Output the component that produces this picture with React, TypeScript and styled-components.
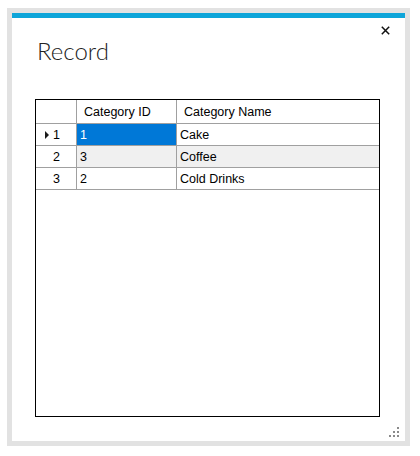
import styled, { createGlobalStyle } from "styled-components";

const GlobalStyle = createGlobalStyle`
  html, body {
    margin: 0;
    padding: 0;
    background: #ffffff;
  }
  body {
    font-family: "Liberation Sans", Arial, sans-serif;
  }
`;

const Frame = styled.div`
  margin: 8px 0 0 7px;
  width: 403px;
  height: 438px;
  box-sizing: border-box;
  padding: 5px;
  background: #e2e2e2;
`;

const Window = styled.div`
  position: relative;
  height: 100%;
  background: #ffffff;
  display: flex;
  flex-direction: column;
`;

const AccentBar = styled.div`
  height: 5px;
  background: #0ea5d9;
`;

const CloseRow = styled.div`
  display: flex;
  justify-content: flex-end;
  padding: 8px 15px 0 0;
`;

const CloseButton = styled.button`
  width: 9px;
  height: 9px;
  padding: 0;
  border: none;
  background: none;
  display: flex;
  cursor: pointer;
`;

const Title = styled.h1`
  margin: 1px 0 0 25px;
  font-family: Lato, "Open Sans", sans-serif;
  font-weight: 300;
  font-size: 24px;
  line-height: 29px;
  color: #222222;
`;

const Grid = styled.div`
  margin: 34px 0 0 23px;
  width: 345px;
  height: 318px;
  box-sizing: border-box;
  border: 1px solid #000000;
  background: #ffffff;
  font-size: 12.5px;
  color: #000000;
`;

const Row = styled.div<{ $header?: boolean }>`
  display: grid;
  grid-template-columns: 41px 100px 202px;
  height: ${(p) => (p.$header ? "24px" : "22px")};
`;

const Cell = styled.div<{ $header?: boolean; $selected?: boolean; $alt?: boolean }>`
  box-sizing: border-box;
  display: flex;
  align-items: center;
  padding-left: ${(p) => (p.$header ? "7px" : "3px")};
  border-right: 1px solid #a0a0a0;
  border-bottom: 1px solid #a0a0a0;
  background: ${(p) => (p.$selected ? "#0078d7" : p.$alt ? "#f0f0f0" : "#ffffff")};
  color: ${(p) => (p.$selected ? "#ffffff" : "#000000")};
  white-space: nowrap;
  overflow: hidden;
  &:last-child {
    border-right: none;
  }
`;

const RowHeader = styled.div`
  box-sizing: border-box;
  display: flex;
  align-items: center;
  padding-left: 9px;
  border-right: 1px solid #a0a0a0;
  border-bottom: 1px solid #a0a0a0;
  background: #ffffff;
`;

const IndicatorSlot = styled.span`
  width: 8px;
  display: flex;
  align-items: center;
`;

const Arrow = styled.span`
  width: 0;
  height: 0;
  border-top: 4px solid transparent;
  border-bottom: 4px solid transparent;
  border-left: 4.5px solid #1a1a1a;
`;

const Grip = styled.svg`
  position: absolute;
  right: 6px;
  bottom: 4px;
`;

const rows = [
  { n: 1, id: "1", name: "Cake" },
  { n: 2, id: "3", name: "Coffee" },
  { n: 3, id: "2", name: "Cold Drinks" },
];

export default function App() {
  return (
    <>
      <GlobalStyle />
      <Frame>
        <Window>
          <AccentBar />
          <CloseRow>
            <CloseButton aria-label="Close">
              <svg width="9" height="9" viewBox="0 0 9 9">
                <path d="M0.8 0.8 L8.2 8.2 M8.2 0.8 L0.8 8.2" stroke="#111" strokeWidth="1.5" />
              </svg>
            </CloseButton>
          </CloseRow>
          <Title>Record</Title>
          <Grid>
            <Row $header>
              <RowHeader />
              <Cell $header>Category ID</Cell>
              <Cell $header>Category Name</Cell>
            </Row>
            {rows.map((r, i) => (
              <Row key={r.n}>
                <RowHeader>
                  <IndicatorSlot>{i === 0 && <Arrow />}</IndicatorSlot>
                  {r.n}
                </RowHeader>
                <Cell $selected={i === 0} $alt={i === 1}>{r.id}</Cell>
                <Cell $alt={i === 1}>{r.name}</Cell>
              </Row>
            ))}
          </Grid>
          <Grip width="10" height="10" viewBox="0 0 10 10">
            <g fill="#8a8a8a">
              <rect x="8" y="0" width="2" height="2" />
              <rect x="4" y="4" width="2" height="2" />
              <rect x="8" y="4" width="2" height="2" />
              <rect x="0" y="8" width="2" height="2" />
              <rect x="4" y="8" width="2" height="2" />
              <rect x="8" y="8" width="2" height="2" />
            </g>
          </Grip>
        </Window>
      </Frame>
    </>
  );
}
